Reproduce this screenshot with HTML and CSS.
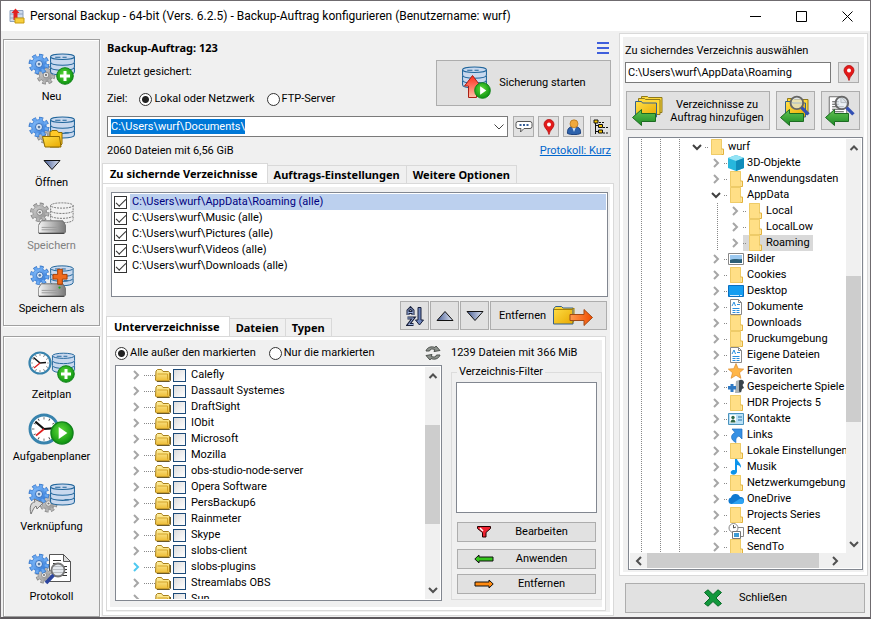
FILE: index.html
```html
<!DOCTYPE html>
<html lang="de">
<head>
<meta charset="utf-8">
<title>Personal Backup</title>
<link rel="stylesheet" href="styles.css">
</head>
<body>
<svg class="sprites" aria-hidden="true">
  <defs>
    <linearGradient id="gBlue" x1="0" y1="0" x2="1" y2="1"><stop offset="0" stop-color="#8fc4fb"/><stop offset="1" stop-color="#2c74d6"/></linearGradient>
    <linearGradient id="gGrey" x1="0" y1="0" x2="1" y2="1"><stop offset="0" stop-color="#d4d4d4"/><stop offset="1" stop-color="#8c8c8c"/></linearGradient>
    <linearGradient id="gTri" x1="0" y1="0" x2="1" y2="0"><stop offset="0" stop-color="#4a5f95"/><stop offset="1" stop-color="#dfe6f4"/></linearGradient>
    <linearGradient id="gFolder" x1="0" y1="0" x2="0" y2="1"><stop offset="0" stop-color="#fff3a8"/><stop offset="1" stop-color="#eebb33"/></linearGradient>
    <linearGradient id="gYellow" x1="0" y1="0" x2="1" y2="1"><stop offset="0" stop-color="#ffe04a"/><stop offset="1" stop-color="#e8a800"/></linearGradient>
    <linearGradient id="gOrange" x1="0" y1="0" x2="1" y2="0"><stop offset="0" stop-color="#ff9a50"/><stop offset="1" stop-color="#f04c00"/></linearGradient>
    <linearGradient id="gGreen" x1="0" y1="0" x2="0" y2="1"><stop offset="0" stop-color="#63c453"/><stop offset="1" stop-color="#1b8a24"/></linearGradient>
    <linearGradient id="gDrive" x1="0" y1="0" x2="1" y2="0"><stop offset="0" stop-color="#f4f4f4"/><stop offset="1" stop-color="#7a7a7a"/></linearGradient>
    <radialGradient id="gBall" cx=".45" cy=".4" r=".6"><stop offset="0" stop-color="#5fdc3a"/><stop offset="1" stop-color="#0c9210"/></radialGradient>
    <linearGradient id="gRed" x1="0" y1="0" x2="0" y2="1"><stop offset="0" stop-color="#ff2a1a"/><stop offset="1" stop-color="#ffc0a8"/></linearGradient>
  </defs>

  <symbol id="gear-blue" viewBox="-12 -12 24 24"><circle r="8.6" fill="none" stroke="#3a78c8" stroke-width="5.400" pathLength="16" stroke-dasharray="1.200 .8"/><circle r="8" fill="url(#gBlue)" stroke="#3f83da" stroke-width="1"/><circle r="8.400" fill="none" stroke="#69a8f1" stroke-width="4" pathLength="16" stroke-dasharray=".9 1.100" stroke-dashoffset="-.15"/><circle r="3.800" fill="#dce9f8" stroke="#2866b8"/><circle r="1.500" fill="#56779f"/></symbol>
  <symbol id="gear-grey" viewBox="-12 -12 24 24"><circle r="8.6" fill="none" stroke="#858585" stroke-width="5.400" pathLength="16" stroke-dasharray="1.200 .8"/><circle r="8" fill="url(#gGrey)" stroke="#8d8d8d" stroke-width="1"/><circle r="8.400" fill="none" stroke="#b4b4b4" stroke-width="4" pathLength="16" stroke-dasharray=".9 1.100" stroke-dashoffset="-.15"/><circle r="3.400" fill="#eee" stroke="#808080"/><circle r="1.400" fill="#777"/></symbol>
  <symbol id="db" viewBox="0 0 26 22"><g fill="#c8d8ee" stroke="#20659b"><path d="M1.5 14v4c0 4.200 23 4.200 23 0v-4"/><path d="M1.500 9v4.500c0 4.200 23 4.200 23 0V9"/><path d="M1.500 3.500V8.500c0 4.200 23 4.200 23 0V3.500"/><ellipse cx="13" cy="3.500" rx="11.500" ry="2.700"/></g><path d="M6 4h5m2 0h4M15 16h4" stroke="#20659b" fill="none"/></symbol>
  <symbol id="db-off" viewBox="0 0 26 22"><g fill="#f2f2f2" stroke="#777" stroke-dasharray="2 1"><path d="M1.500 14v4c0 4.200 23 4.200 23 0v-4"/><path d="M1.500 9v4.500c0 4.200 23 4.200 23 0V9"/><path d="M1.500 3.500V8.500c0 4.200 23 4.200 23 0V3.500"/><ellipse cx="13" cy="3.500" rx="11.500" ry="2.700"/></g></symbol>
  <symbol id="ball-plus" viewBox="0 0 18 18"><circle cx="9" cy="9" r="8.300" fill="url(#gBall)" stroke="#11831a"/><path d="M9 4v10M4 9h10" stroke="#fff" stroke-width="3"/></symbol>
  <symbol id="ball-play" viewBox="0 0 18 18"><circle cx="9" cy="9" r="8.300" fill="url(#gBall)" stroke="#11831a"/><path d="M6.500 4.500v9l6.500-4.500z" fill="#fff"/></symbol>
  <symbol id="drive" viewBox="0 0 30 15"><path d="M3.500 1h23l3 5v7l-2 1.500H1.500L.5 13V6z" fill="url(#gDrive)" stroke="#6d6d6d"/><path d="M1 6h28v7H1z" fill="url(#gDrive)"/><path d="M4 8h16M4 10.500h16" stroke="#9a9a9a"/><path d="M1 14.200h27" stroke="#333"/></symbol>
  <symbol id="clock" viewBox="0 0 24 24"><circle cx="12" cy="12" r="10.500" fill="#fff" stroke="#3883ad" stroke-width="2.200"/><circle cx="12" cy="12" r="8" fill="none" stroke="#444" stroke-width="1.800" pathLength="120" stroke-dasharray="1.500 8.500" stroke-dashoffset=".75"/><path d="M5.500 6.500L12 12l6-.5" stroke="#111" stroke-width="1.600" fill="none"/><path d="M12 12l-6 5" stroke="#e02020" stroke-width="1.300"/></symbol>
  <symbol id="open-folder" viewBox="0 0 22 18"><path d="M8 4V2.500L10 .5h5l1.500 2H20V14l-3 3H8z" fill="#ffc928" stroke="#8e6a00"/><path d="M.5 6.500h17L19 17H3z" fill="url(#gYellow)" stroke="#8e6a00"/></symbol>
  <symbol id="loupe" viewBox="0 0 20 20"><circle cx="7.500" cy="7.500" r="6" fill="#dfe8f0" fill-opacity=".65" stroke="#666" stroke-width="1.800"/><path d="M12 12l6.500 6.500" stroke="#3350b4" stroke-width="3.200"/></symbol>
  <symbol id="page" viewBox="0 0 24 28"><path d="M1.500.5h14l7 7v20h-21z" fill="#fff" stroke="#555"/><path d="M15.500.5v7h7z" fill="#ddd" stroke="#555"/><path d="M5 6.500h8M5 9.500h8M5 12.500h14M5 15.500h14M5 18.500h14M5 21.500h14" stroke="#333"/></symbol>

  <symbol id="i-new" viewBox="0 0 48 32"><use href="#gear-grey" x="8" y="12" width="20" height="20"/><use href="#gear-blue" width="22" height="22"/><use href="#db" x="21" width="27" height="23"/><use href="#ball-plus" x="28" y="14" width="18" height="18"/></symbol>
  <symbol id="i-open" viewBox="0 0 48 32"><use href="#gear-grey" x="8" y="10" width="18" height="18"/><use href="#gear-blue" width="22" height="22"/><use href="#db" x="21" width="27" height="23"/><use href="#open-folder" x="14" y="14" width="22" height="18"/></symbol>
  <symbol id="i-save-off" viewBox="0 0 48 34"><use href="#gear-grey" width="22" height="22"/><use href="#db-off" x="21" width="27" height="23"/><use href="#drive" x="9" y="19" width="30" height="15"/></symbol>
  <symbol id="i-save-as" viewBox="0 0 48 34"><use href="#gear-blue" width="22" height="22"/><use href="#db" x="21" width="27" height="23"/><use href="#drive" x="9" y="19" width="30" height="15"/><path d="M30 4.500h5v5.500h5v5h-5v5.500h-5V15h-5v-5h5z" fill="#f06a1c" stroke="#a33c00"/><circle cx="32" cy="24" r="1.200" fill="#18a51e"/></symbol>
  <symbol id="i-plan" viewBox="0 0 48 32"><use href="#db" x="23" y="1" width="25" height="22"/><use href="#clock" width="24" height="24"/><use href="#ball-plus" x="29" y="14" width="18" height="18"/></symbol>
  <symbol id="i-task" viewBox="0 0 48 32"><use href="#clock" width="32" height="32"/><use href="#ball-play" x="22" y="8" width="24" height="24"/></symbol>
  <symbol id="i-link" viewBox="0 0 48 32"><use href="#gear-grey" x="11" y="11" width="19" height="19"/><use href="#gear-blue" width="22" height="22"/><use href="#db" x="21" width="27" height="23"/><path d="M3 31c-2-7 0-12 4-12l-1-3 9 4-6 6-1-3c-2 1-3 4-5 8z" fill="#d9d9d9" stroke="#777"/></symbol>
  <symbol id="i-log" viewBox="0 0 48 32"><use href="#page" x="20" y="1" width="24" height="28"/><use href="#gear-grey" x="7" y="13" width="18" height="18"/><use href="#gear-blue" width="22" height="22"/><circle cx="30" cy="17" r="6.500" fill="#dfe4ea" fill-opacity=".8" stroke="#777" stroke-width="1.800"/><path d="M25.500 22L18 30" stroke="#2c459f" stroke-width="3.600"/></symbol>

  <symbol id="i-start" viewBox="0 0 32 34"><use href="#db" x="0" y="0" width="27" height="23"/><path d="M11.500 9.500L19.500 20h-4v11.500h-8V20h-4z" fill="url(#gRed)" stroke="#a81f14"/><use href="#ball-play" x="13" y="16" width="17" height="17"/></symbol>
  <symbol id="tri-down" viewBox="0 0 18 12"><path d="M1 1.500h16L9 10.500z" fill="url(#gTri)" stroke="#111"/></symbol>
  <symbol id="tri-up" viewBox="0 0 18 12"><path d="M1 10.500h16L9 1.500z" fill="url(#gTri)" stroke="#111"/></symbol>
  <symbol id="chev-right" viewBox="0 0 12 12"><path d="M4 2l4 4-4 4" fill="none" stroke="currentColor" stroke-width="2"/></symbol>
  <symbol id="chev-left" viewBox="0 0 12 12"><path d="M8 2L4 6l4 4" fill="none" stroke="currentColor" stroke-width="2"/></symbol>
  <symbol id="chev-down" viewBox="0 0 12 12"><path d="M2 4l4 4 4-4" fill="none" stroke="currentColor" stroke-width="2"/></symbol>
  <symbol id="chev-up" viewBox="0 0 12 12"><path d="M2.500 8L6 4.500 9.500 8" fill="none" stroke="currentColor" stroke-width="2"/></symbol>
  <symbol id="pin" viewBox="0 0 12 16"><path d="M6 15.500C5 10.500 1 9 1 5.500a5 5 0 0 1 10 0C11 9 7 10.500 6 15.500z" fill="#e31a1a" stroke="#b50f0f" stroke-width=".8"/><circle cx="6" cy="5.500" r="2" fill="#fff"/></symbol>
  <symbol id="bubble" viewBox="0 0 18 14"><path d="M3 1.500h12a2 2 0 0 1 2 2v3a2 2 0 0 1-2 2H9L5.500 12l.5-3.500H3a2 2 0 0 1-2-2v-3a2 2 0 0 1 2-2z" fill="#fff" stroke="#555"/><path d="M4.500 5h2M8 5h2m1.500 0h2" stroke="#345c96" stroke-width="2"/></symbol>
  <symbol id="user" viewBox="0 0 16 16"><path d="M1.500 14.500c-.5-5 2-7 6.500-7s7 2 6.500 7c-3 1.500-10 1.500-13 0z" fill="#2d62ac" stroke="#1d427f"/><path d="M6 8l2 5 2-5z" fill="#cfe2f7"/><circle cx="8" cy="4.800" r="4" fill="#f0a93c" stroke="#b06f14" stroke-width=".7"/></symbol>
  <symbol id="struct" viewBox="0 0 16 16"><path d="M2.500 3v12M3 6.500h3M3 12.500h3" stroke="#111" fill="none"/><path d="M6 3.500h6M10 8.500h6M10 14h6" stroke="#111" stroke-dasharray="2 1" fill="none"/><path d="M1 1h4v3H1zM5.500 5.500h4v3h-4zM5.500 11h4v3h-4z" fill="#f5c400" stroke="#111"/></symbol>
  <symbol id="sort" viewBox="0 0 18 20"><g fill="none" stroke="#18203c" stroke-width="3"><path d="M2 9V4.500L4.500 2 7 4.500V9M2 6.500h5M1.500 12h6l-5 6.500h5"/></g><path d="M2 9V4.500L4.500 2 7 4.500V9M2 6.500h5M1.500 12h6l-5 6.500h5" fill="none" stroke="#9db1de"/><path d="M12 1.500h3V14h2.500l-4 5-4-5H12z" fill="#6f86bd" stroke="#18203c"/></symbol>
  <symbol id="folder-remove" viewBox="0 0 42 22"><path d="M1.500 4l2-2.500h6l1.500 1.500h10v16h-19.500z" fill="url(#gYellow)" stroke="#34618c"/><path d="M2 4.500h18l2-1.500v13l-2 2.500" fill="none" stroke="#a88100"/><path d="M18 9.500h14V4.500l8.500 8-8.500 8v-5H18z" fill="url(#gOrange)" stroke="#a04a16"/></symbol>
  <symbol id="refresh" viewBox="0 0 18 16"><path d="M2 6c1-4 6-5 9-3.500l1-1.500 4 4.500-6 1 .8-2C8 3.500 6 4 5.500 6z" fill="#8d928d" stroke="#4c504c"/><path d="M16 10c-1 4-6 5-9 3.500L6 15l-4-4.500 6-1-.8 2c2.800 1 4.800.5 5.300-1.500z" fill="#8d928d" stroke="#4c504c"/></symbol>
  <symbol id="funnel" viewBox="0 0 14 12"><path d="M.5.500h13v2L9 6.500v4.500H5.500V6.500l-5-4z" fill="#ee2230" stroke="#200"/><path d="M3 2l3 3" stroke="#fff" stroke-width="1.500"/></symbol>
  <symbol id="arr-left" viewBox="0 0 20 10"><path d="M.8 5L5 1v2h14v4H5v2z" fill="#35c51c" stroke="#111"/></symbol>
  <symbol id="arr-right" viewBox="0 0 20 10"><path d="M19.200 5L15 1v2H1v4h14v2z" fill="#ff8a10" stroke="#111"/></symbol>
  <symbol id="big-arrow" viewBox="0 0 24 17"><path d="M.5 8.500L9.500.500v4h14v8h-14v4z" fill="url(#gGreen)" stroke="#1c6b22"/></symbol>
  <symbol id="folders-add" viewBox="0 0 32 32"><g fill="#ffd83a" stroke="#8f7a1a"><path d="M9.500 3V1.500h6l1 1H30v15H9.500z"/><path d="M6.500 5V3.500h6l1 1H28v15H6.500z"/></g><path d="M3.500 8V6.500h6l1 1.500H24.500v14h-21z" fill="url(#gYellow)" stroke="#34618c"/><use href="#big-arrow" x="0" y="14" width="24" height="17"/></symbol>
  <symbol id="folder-find" viewBox="0 0 32 32"><path d="M7.500 5V3.500h6l1 1H28v15H7.500z" fill="#ffd83a" stroke="#8f7a1a"/><path d="M5.500 8V6.500h6l1 1.500H25.500v14h-20z" fill="url(#gYellow)" stroke="#34618c"/><use href="#loupe" x="9" y="0" width="21" height="21"/><use href="#big-arrow" x="0" y="14" width="24" height="17"/></symbol>
  <symbol id="page-find" viewBox="0 0 32 32"><use href="#page" x="3" y="1" width="20" height="24"/><use href="#loupe" x="9" y="0" width="21" height="21"/><use href="#big-arrow" x="0" y="14" width="24" height="17"/></symbol>
  <symbol id="cross" viewBox="0 0 20 18"><path d="M1.500 3.500L5 .8 10 5.500 15 .8l3.500 2.700L13 9l5.500 5.500L15 17.200 10 12.500 5 17.200 1.500 14.500 7 9z" fill="#12983c" stroke="#0a6a28"/></symbol>
  <symbol id="app" viewBox="0 0 16 16"><path d="M1 2.500h13v11H1z" fill="#cfdbec" stroke="#8fa3be"/><path d="M1 6h13M1 10h13" stroke="#8fa3be"/><path d="M6.500.5L10.500 5H8.500v7h-4V5h-2z" fill="#e22222"/><path d="M6 10h9v5H6z" fill="#f7cf3c" stroke="#c79a10"/></symbol>

  <symbol id="f-classic" viewBox="0 0 16 16"><path d="M1 4l1.500-1.500h4L8 4.500h5.500l1 1V13l-1 1h-12L.5 13z" fill="url(#gFolder)" stroke="#a8801c"/><path d="M2.500 7h10v5.500" fill="none" stroke="#d3a42a"/><path d="M2 14.500h12.500l1-1V6" fill="none" stroke="#6a5a2c"/></symbol>
  <symbol id="f-win" viewBox="0 0 16 16"><path d="M2 0h11v16H2z" fill="#ffdf86"/><path d="M2.500.500h10v15h-10z" fill="none" stroke="#eecb68"/><path d="M12.500 10h2v5.500h-2" fill="#ffe7a0" stroke="#e2b23c"/></symbol>
  <symbol id="f-3d" viewBox="0 0 16 16"><path d="M0 3l8-3 8 3v10l-8 3-8-3z" fill="#27b7dd"/><path d="M0 3l8 3 8-3-8-3z" fill="#94e3f5"/><path d="M8 6l8-3v10l-8 3z" fill="#118dbb"/></symbol>
  <symbol id="f-pic" viewBox="0 0 16 16"><path d="M.5 2.500h15v11H.5z" fill="#fff" stroke="#888"/><path d="M2 4h12v8H2z" fill="#9cc9f0"/><path d="M2 9c4-2 8 0 12-1v4H2z" fill="#2b5f78"/></symbol>
  <symbol id="f-desk" viewBox="0 0 16 16"><path d="M.5 2.500h15v11H.5z" fill="#149df0" stroke="#0a6fc0"/><path d="M2 12.500h9m1 0h2" stroke="#cfeaff"/></symbol>
  <symbol id="f-doc" viewBox="0 0 16 16"><path d="M2.500.500h8l3 3v12h-11z" fill="#fff" stroke="#888"/><path d="M10.500.500v3h3" fill="none" stroke="#888"/><path d="M4 7l2-4 1.500 4M9 5.500h3M4.500 9.500h7M4.500 11.500h3m1 0h3M4.500 13.500h3m1 0h3" stroke="#2a8fe0" fill="none"/></symbol>
  <symbol id="f-star" viewBox="0 0 16 16"><path d="M8 .5l2.200 5.200 5.500.4-4.200 3.600 1.400 5.600L8 12.300l-4.900 3 1.400-5.600L.3 6.100l5.500-.4z" fill="#ffb648" stroke="#dc8a28" stroke-width=".7"/></symbol>
  <symbol id="f-game" viewBox="0 0 16 16"><path d="M8 2l3-1 1 13H7z" fill="#aab3b8"/><path d="M11 1.500c2-1.500 5-.5 5 2.500l-1.500 2L16 9l-2 1-1 3.500-2-1z" fill="#3a444b"/><path d="M0 7h2.500V5h3v2H8v3.500H5.500V13h-3v-2.500H0z" fill="#2e79c4"/></symbol>
  <symbol id="f-contact" viewBox="0 0 16 16"><path d="M.5 2.500h15v11H.5z" fill="#b9e0f6" stroke="#4a93bd"/><path d="M2 4h6v8H2z" fill="#fff"/><circle cx="5" cy="6.500" r="1.700" fill="#2f6a4a"/><path d="M2.500 11.500c0-4 5-4 5 0z" fill="#2f6a4a"/><path d="M10 6h4M10 9h4" stroke="#2a75aa"/></symbol>
  <symbol id="f-link" viewBox="0 0 16 16"><path d="M4 2h10v10l-3-3c-3 1-3.500 3.500-3 6.500C2.500 13 2 8 7 5.500z" fill="#3590e4" stroke="#1e6fc0" stroke-width=".7"/></symbol>
  <symbol id="f-music" viewBox="0 0 16 16"><path d="M7 0h2c.5 3 4.500 4 4 9-1-2-2-3-4-3v6.500C9 15 6.500 16 4.500 15.500S2 12.500 4 11.500c1-.6 2-.5 3-.2z" fill="#0c94ec"/></symbol>
  <symbol id="f-cloud" viewBox="0 0 16 16"><path d="M3.500 13A3.300 3.300 0 0 1 3 6.500 4.800 4.800 0 0 1 12 6a3.500 3.500 0 0 1 1 7z" fill="#0f79d0"/><path d="M3.500 13l8-5c3-1.500 5 1 4.300 3-.4 1.400-1.500 2-2.800 2z" fill="#2ea3f2"/></symbol>
  <symbol id="f-recent" viewBox="0 0 16 16"><path d="M8.500 4.500h7v9h-7z" fill="#fff" stroke="#888"/><circle cx="5.500" cy="5" r="4.500" fill="#fff" stroke="#888"/><path d="M5.500 5V2M5.500 5l2.500-1" stroke="#555"/><path d="M4.500 8.500h8v7h-8z" fill="#fff" stroke="#777"/><path d="M6 10h5v4H6z" fill="#3c9bd6"/></symbol>
</svg>

<header class="titlebar">
  <svg class="i16"><use href="#app"/></svg>
  <h1>Personal Backup - 64-bit (Vers. 6.2.5) - Backup-Auftrag konfigurieren (Benutzername: wurf)</h1>
  <div class="win-buttons">
    <button type="button" aria-label="Minimieren"><svg viewBox="0 0 11 11"><path d="M0 5.500h11" stroke="#000"/></svg></button>
    <button type="button" aria-label="Maximieren"><svg viewBox="0 0 11 11"><path d="M.5.500h10v10H.5z" fill="none" stroke="#000"/></svg></button>
    <button type="button" aria-label="Fenster schließen"><svg viewBox="0 0 11 11"><path d="M.5.500l10 10m0-10l-10 10" stroke="#000"/></svg></button>
  </div>
</header>

<div class="content">
  <nav class="sidebar">
    <div class="toolbox">
      <button type="button" class="tool"><svg class="tool-icon"><use href="#i-new"/></svg><span>Neu</span></button>
      <button type="button" class="tool"><svg class="tool-icon"><use href="#i-open"/></svg><svg class="tool-drop"><use href="#tri-down"/></svg><span>Öffnen</span></button>
      <button type="button" class="tool" disabled><svg class="tool-icon"><use href="#i-save-off"/></svg><span>Speichern</span></button>
      <button type="button" class="tool"><svg class="tool-icon"><use href="#i-save-as"/></svg><span>Speichern als</span></button>
    </div>
    <div class="toolbox toolbox-grow">
      <button type="button" class="tool"><svg class="tool-icon"><use href="#i-plan"/></svg><span>Zeitplan</span></button>
      <button type="button" class="tool"><svg class="tool-icon"><use href="#i-task"/></svg><span>Aufgabenplaner</span></button>
      <button type="button" class="tool tool-apart"><svg class="tool-icon"><use href="#i-link"/></svg><span>Verknüpfung</span></button>
      <button type="button" class="tool tool-apart"><svg class="tool-icon"><use href="#i-log"/></svg><span>Protokoll</span></button>
    </div>
  </nav>

  <main class="job">
    <div class="job-head">
      <div class="spread"><h2>Backup-Auftrag: 123</h2><button type="button" class="menu" aria-label="Menü"><svg viewBox="0 0 12 12"><path d="M0 1h12M0 6h12M0 11h12" stroke="#3f5fdc" stroke-width="2"/></svg></button></div>
      <div class="spread head-row">
        <div class="head-text">
          <span>Zuletzt gesichert:</span>
          <div class="radios">
            <span>Ziel:</span>
            <label class="radio"><input type="radio" name="ziel" checked>Lokal oder Netzwerk</label>
            <label class="radio"><input type="radio" name="ziel">FTP-Server</label>
          </div>
        </div>
        <button type="button" class="btn start"><svg><use href="#i-start"/></svg>Sicherung starten</button>
      </div>
      <div class="target">
        <div class="combo"><input type="text" aria-label="Zielverzeichnis" value="C:\Users\wurf\Documents\"><button type="button" aria-label="Liste öffnen"><svg viewBox="0 0 10 6"><path d="M.5.500L5 5l4.500-4.500" fill="none" stroke="#444"/></svg></button></div>
        <button type="button" class="btn sq" aria-label="Kommentar"><svg class="i18"><use href="#bubble"/></svg></button>
        <button type="button" class="btn sq" aria-label="Pfad wählen"><svg class="i16"><use href="#pin"/></svg></button>
        <button type="button" class="btn sq" aria-label="Anmeldung"><svg class="i16"><use href="#user"/></svg></button>
        <button type="button" class="btn sq sq-last" aria-label="Struktur"><svg class="i16"><use href="#struct"/></svg></button>
      </div>
      <div class="spread"><span>2060 Dateien mit 6,56 GiB</span><a href="#protokoll">Protokoll: Kurz</a></div>
    </div>

    <div class="tabs" role="tablist">
      <button type="button" role="tab" aria-selected="true">Zu sichernde Verzeichnisse</button>
      <button type="button" role="tab">Auftrags-Einstellungen</button>
      <button type="button" role="tab">Weitere Optionen</button>
    </div>
    <section class="page page-outer">
      <div class="checklist">
        <label class="current"><input type="checkbox" checked><span>C:\Users\wurf\AppData\Roaming (alle)</span></label>
        <label><input type="checkbox" checked><span>C:\Users\wurf\Music (alle)</span></label>
        <label><input type="checkbox" checked><span>C:\Users\wurf\Pictures (alle)</span></label>
        <label><input type="checkbox" checked><span>C:\Users\wurf\Videos (alle)</span></label>
        <label><input type="checkbox" checked><span>C:\Users\wurf\Downloads (alle)</span></label>
      </div>
      <div class="sub-head">
        <div class="tabs" role="tablist">
          <button type="button" role="tab" aria-selected="true">Unterverzeichnisse</button>
          <button type="button" role="tab">Dateien</button>
          <button type="button" role="tab">Typen</button>
        </div>
        <div class="list-actions">
          <button type="button" class="btn" aria-label="Sortieren"><svg class="i-sort"><use href="#sort"/></svg></button>
          <button type="button" class="btn" aria-label="Nach oben"><svg class="i-tri"><use href="#tri-up"/></svg></button>
          <button type="button" class="btn" aria-label="Nach unten"><svg class="i-tri"><use href="#tri-down"/></svg></button>
          <button type="button" class="btn remove">Entfernen<svg><use href="#folder-remove"/></svg></button>
        </div>
      </div>
      <section class="page page-inner">
        <div class="subdirs">
          <div class="radios">
            <label class="radio"><input type="radio" name="mark" checked>Alle außer den markierten</label>
            <label class="radio"><input type="radio" name="mark">Nur die markierten</label>
            <button type="button" class="plain" aria-label="Aktualisieren"><svg><use href="#refresh"/></svg></button>
          </div>
          <div class="tree-box">
            <ul class="tree dirs">
              <li><svg class="chev"><use href="#chev-right"/></svg><label><i></i><svg class="i16"><use href="#f-classic"/></svg><input type="checkbox"><span>Calefly</span></label></li>
              <li><svg class="chev"><use href="#chev-right"/></svg><label><i></i><svg class="i16"><use href="#f-classic"/></svg><input type="checkbox"><span>Dassault Systemes</span></label></li>
              <li><svg class="chev"><use href="#chev-right"/></svg><label><i></i><svg class="i16"><use href="#f-classic"/></svg><input type="checkbox"><span>DraftSight</span></label></li>
              <li><svg class="chev"><use href="#chev-right"/></svg><label><i></i><svg class="i16"><use href="#f-classic"/></svg><input type="checkbox"><span>IObit</span></label></li>
              <li><svg class="chev"><use href="#chev-right"/></svg><label><i></i><svg class="i16"><use href="#f-classic"/></svg><input type="checkbox"><span>Microsoft</span></label></li>
              <li><svg class="chev"><use href="#chev-right"/></svg><label><i></i><svg class="i16"><use href="#f-classic"/></svg><input type="checkbox"><span>Mozilla</span></label></li>
              <li><svg class="chev"><use href="#chev-right"/></svg><label><i></i><svg class="i16"><use href="#f-classic"/></svg><input type="checkbox"><span>obs-studio-node-server</span></label></li>
              <li><svg class="chev"><use href="#chev-right"/></svg><label><i></i><svg class="i16"><use href="#f-classic"/></svg><input type="checkbox"><span>Opera Software</span></label></li>
              <li><svg class="chev"><use href="#chev-right"/></svg><label><i></i><svg class="i16"><use href="#f-classic"/></svg><input type="checkbox"><span>PersBackup6</span></label></li>
              <li><svg class="chev"><use href="#chev-right"/></svg><label><i></i><svg class="i16"><use href="#f-classic"/></svg><input type="checkbox"><span>Rainmeter</span></label></li>
              <li><svg class="chev"><use href="#chev-right"/></svg><label><i></i><svg class="i16"><use href="#f-classic"/></svg><input type="checkbox"><span>Skype</span></label></li>
              <li><svg class="chev"><use href="#chev-right"/></svg><label><i></i><svg class="i16"><use href="#f-classic"/></svg><input type="checkbox"><span>slobs-client</span></label></li>
              <li><svg class="chev hot"><use href="#chev-right"/></svg><label><i></i><svg class="i16"><use href="#f-classic"/></svg><input type="checkbox"><span>slobs-plugins</span></label></li>
              <li><svg class="chev"><use href="#chev-right"/></svg><label><i></i><svg class="i16"><use href="#f-classic"/></svg><input type="checkbox"><span>Streamlabs OBS</span></label></li>
              <li><svg class="chev"><use href="#chev-right"/></svg><label><i></i><svg class="i16"><use href="#f-classic"/></svg><input type="checkbox"><span>Sun</span></label></li>
            </ul>
            <div class="vbar"><svg><use href="#chev-up"/></svg><div class="track track-dirs"><div class="thumb"></div></div><svg><use href="#chev-down"/></svg></div>
          </div>
        </div>
        <div class="filter">
          <span>1239 Dateien mit 366 MiB</span>
          <fieldset>
            <legend>Verzeichnis-Filter</legend>
            <select multiple aria-label="Verzeichnis-Filter"></select>
            <div class="filter-actions">
              <button type="button" class="btn"><svg class="i-filter"><use href="#funnel"/></svg><span>Bearbeiten</span></button>
              <button type="button" class="btn btn-apart"><svg class="i-filter"><use href="#arr-left"/></svg><span>Anwenden</span></button>
              <button type="button" class="btn"><svg class="i-filter"><use href="#arr-right"/></svg><span>Entfernen</span></button>
            </div>
          </fieldset>
        </div>
      </section>
    </section>
  </main>

  <aside class="picker">
    <section class="picker-panel">
      <label for="pfad">Zu sicherndes Verzeichnis auswählen</label>
      <div class="path-row"><input id="pfad" type="text" value="C:\Users\wurf\AppData\Roaming"><button type="button" class="btn sq" aria-label="Pfad wählen"><svg class="i16"><use href="#pin"/></svg></button></div>
      <div class="add-row">
        <button type="button" class="btn add"><svg class="i32"><use href="#folders-add"/></svg><span>Verzeichnisse zu<br>Auftrag hinzufügen</span></button>
        <button type="button" class="btn" aria-label="Ordner suchen"><svg class="i32"><use href="#folder-find"/></svg></button>
        <button type="button" class="btn" aria-label="Datei suchen"><svg class="i32"><use href="#page-find"/></svg></button>
      </div>
      <div class="tree-box explorer-box">
        <ul class="tree explorer">
          <li><svg class="chev open"><use href="#chev-down"/></svg><span class="node"><i></i><svg class="i16"><use href="#f-win"/></svg><span>wurf</span></span></li>
          <li class="d1"><svg class="chev"><use href="#chev-right"/></svg><span class="node"><i></i><svg class="i16"><use href="#f-3d"/></svg><span>3D-Objekte</span></span></li>
          <li class="d1"><svg class="chev"><use href="#chev-right"/></svg><span class="node"><i></i><svg class="i16"><use href="#f-win"/></svg><span>Anwendungsdaten</span></span></li>
          <li class="d1"><svg class="chev open"><use href="#chev-down"/></svg><span class="node"><i></i><svg class="i16"><use href="#f-win"/></svg><span>AppData</span></span></li>
          <li class="d2"><svg class="chev"><use href="#chev-right"/></svg><span class="node"><i></i><svg class="i16"><use href="#f-win"/></svg><span>Local</span></span></li>
          <li class="d2"><svg class="chev"><use href="#chev-right"/></svg><span class="node"><i></i><svg class="i16"><use href="#f-win"/></svg><span>LocalLow</span></span></li>
          <li class="d2"><svg class="chev"><use href="#chev-right"/></svg><span class="node picked"><i></i><svg class="i16"><use href="#f-win"/></svg><span>Roaming</span></span></li>
          <li class="d1"><svg class="chev"><use href="#chev-right"/></svg><span class="node"><i></i><svg class="i16"><use href="#f-pic"/></svg><span>Bilder</span></span></li>
          <li class="d1"><svg class="chev"><use href="#chev-right"/></svg><span class="node"><i></i><svg class="i16"><use href="#f-win"/></svg><span>Cookies</span></span></li>
          <li class="d1"><svg class="chev"><use href="#chev-right"/></svg><span class="node"><i></i><svg class="i16"><use href="#f-desk"/></svg><span>Desktop</span></span></li>
          <li class="d1"><svg class="chev"><use href="#chev-right"/></svg><span class="node"><i></i><svg class="i16"><use href="#f-doc"/></svg><span>Dokumente</span></span></li>
          <li class="d1"><svg class="chev"><use href="#chev-right"/></svg><span class="node"><i></i><svg class="i16"><use href="#f-win"/></svg><span>Downloads</span></span></li>
          <li class="d1"><svg class="chev"><use href="#chev-right"/></svg><span class="node"><i></i><svg class="i16"><use href="#f-win"/></svg><span>Druckumgebung</span></span></li>
          <li class="d1"><svg class="chev"><use href="#chev-right"/></svg><span class="node"><i></i><svg class="i16"><use href="#f-doc"/></svg><span>Eigene Dateien</span></span></li>
          <li class="d1"><svg class="chev"><use href="#chev-right"/></svg><span class="node"><i></i><svg class="i16"><use href="#f-star"/></svg><span>Favoriten</span></span></li>
          <li class="d1"><svg class="chev"><use href="#chev-right"/></svg><span class="node"><i></i><svg class="i16"><use href="#f-game"/></svg><span>Gespeicherte Spiele</span></span></li>
          <li class="d1"><svg class="chev"><use href="#chev-right"/></svg><span class="node"><i></i><svg class="i16"><use href="#f-win"/></svg><span>HDR Projects 5</span></span></li>
          <li class="d1"><svg class="chev"><use href="#chev-right"/></svg><span class="node"><i></i><svg class="i16"><use href="#f-contact"/></svg><span>Kontakte</span></span></li>
          <li class="d1"><svg class="chev"><use href="#chev-right"/></svg><span class="node"><i></i><svg class="i16"><use href="#f-link"/></svg><span>Links</span></span></li>
          <li class="d1"><svg class="chev"><use href="#chev-right"/></svg><span class="node"><i></i><svg class="i16"><use href="#f-win"/></svg><span>Lokale Einstellungen</span></span></li>
          <li class="d1"><svg class="chev"><use href="#chev-right"/></svg><span class="node"><i></i><svg class="i16"><use href="#f-music"/></svg><span>Musik</span></span></li>
          <li class="d1"><svg class="chev"><use href="#chev-right"/></svg><span class="node"><i></i><svg class="i16"><use href="#f-win"/></svg><span>Netzwerkumgebung</span></span></li>
          <li class="d1"><svg class="chev"><use href="#chev-right"/></svg><span class="node"><i></i><svg class="i16"><use href="#f-cloud"/></svg><span>OneDrive</span></span></li>
          <li class="d1"><svg class="chev"><use href="#chev-right"/></svg><span class="node"><i></i><svg class="i16"><use href="#f-win"/></svg><span>Projects Series</span></span></li>
          <li class="d1"><svg class="chev"><use href="#chev-right"/></svg><span class="node"><i></i><svg class="i16"><use href="#f-recent"/></svg><span>Recent</span></span></li>
          <li class="d1"><svg class="chev"><use href="#chev-right"/></svg><span class="node"><i></i><svg class="i16"><use href="#f-win"/></svg><span>SendTo</span></span></li>
        </ul>
        <div class="vbar"><svg><use href="#chev-up"/></svg><div class="track track-explorer"><div class="thumb"></div></div><svg><use href="#chev-down"/></svg></div>
        <div class="hbar"><svg><use href="#chev-left"/></svg><div class="track"><div class="thumb"></div></div><svg><use href="#chev-right"/></svg></div>
      </div>
    </section>
    <button type="button" class="btn close"><svg><use href="#cross"/></svg>Schließen</button>
  </aside>
</div>
</body>
</html>
```
FILE: styles.css
```css
* { box-sizing: border-box; }

body {
  display: flex;
  flex-direction: column;
  height: 100vh;
  margin: 0;
  border: 1px solid #6f6b6f;
  border-bottom: 2px solid #5c585c;
  background: #f0f0f0;
  color: #000;
  font: 11px/16px Roboto, "Open Sans", sans-serif;
  overflow: hidden;
}

svg { display: block; flex: none; overflow: visible; }
.sprites { position: absolute; width: 0; height: 0; }
.i16 { width: 16px; height: 16px; }
.i18 { width: 18px; height: 14px; }
.i32 { width: 32px; height: 32px; }

button, input, select { margin: 0; font: inherit; color: inherit; }
button { display: flex; align-items: center; justify-content: center; padding: 0; border: 0; background: none; white-space: nowrap; }
h1, h2 { margin: 0; }
h2, .tabs button { font-family: "Noto Sans", "Open Sans", sans-serif; font-size: 11px; font-weight: 700; }

.btn { border: 1px solid #adadad; background: #e1e1e1; }
.sq { width: 21px; height: 21px; flex: none; }

/* title bar */
.titlebar { display: flex; align-items: center; flex: none; height: 30px; padding-left: 8px; background: #fff; gap: 5px; }
.titlebar h1 { font-size: 12px; font-weight: 400; white-space: nowrap; }
.win-buttons { display: flex; margin-left: auto; }
.win-buttons button { width: 46px; height: 30px; }
.win-buttons svg { width: 11px; height: 11px; }

.content { display: flex; flex: 1; min-height: 0; }

/* sidebar */
.sidebar { display: flex; flex-direction: column; flex: none; width: 101px; padding: 8px 2px 0 2px; gap: 10px; }
.toolbox { display: flex; flex-direction: column; gap: 11px; padding: 13px 0 8px; border: 1px solid #a0a0a0; box-shadow: inset 1px 1px #fff, 1px 1px #fff; }
.toolbox-grow { flex: 1; gap: 10px; padding-top: 14px; }
.tool { flex-direction: column; gap: 4px; }
.tool:disabled { color: #808080; }
.tool-icon { width: 48px; height: 32px; }
.tool-drop { width: 18px; height: 12px; margin-top: 7px; }
.tool-apart { margin-top: 8px; }

/* backup job */
.job { display: flex; flex-direction: column; flex: 1; min-width: 0; }
.job-head { display: flex; flex-direction: column; padding: 9px 3px 4px 5px; }
.spread { display: flex; justify-content: space-between; }
.menu svg { width: 12px; height: 12px; }
.menu { margin-right: 2px; }
.head-row { margin-top: 4px; }
.head-text { display: flex; flex-direction: column; gap: 11px; padding-top: 4px; }
.radios { display: flex; align-items: center; gap: 12px; }
.radio { display: flex; align-items: center; gap: 2px; white-space: nowrap; }
input[type="radio"] { appearance: none; width: 13px; height: 13px; border: 1px solid #333; border-radius: 50%; background: #fff; }
input[type="radio"]:checked { background: radial-gradient(circle, #222 0 3px, #fff 4px); }
.start { width: 175px; height: 46px; gap: 6px; }
.start svg { width: 32px; height: 34px; }
.target { display: flex; gap: 4px; margin: 9px 0 6px; }
.combo { display: flex; align-items: center; flex: 1; min-width: 0; height: 21px; margin-right: 1px; padding-left: 3px; border: 1px solid #7a7a7a; background: #fff; }
.combo input { field-sizing: content; height: 15px; padding: 0; border: 0; background: #0078d7; color: #fff; }
.combo button { width: 17px; margin-left: auto; }
.combo svg { width: 10px; height: 6px; }
.sq-last { margin-left: 2px; }
.job-head a { color: #0066cc; }

/* tabs */
.tabs { display: flex; align-items: flex-end; }
.tabs button { height: 18px; padding: 0 6px; border: 1px solid #d9d9d9; border-bottom: 0; }
.tabs button + button { border-left: 0; }
.tabs button[aria-selected="true"] { height: 20px; padding: 0 9px 0 7px; background: #fff; }
.page { display: flex; flex: 1; min-height: 0; border: 1px solid #d9d9d9; box-shadow: inset 0 0 0 3px #fff; }
.page-outer { flex-direction: column; padding: 8px 4px 4px 4px; margin-bottom: 1px; }
.page-inner { padding: 8px 3px 9px 8px; gap: 9px; margin: 0 3px 0 -1px; }

.checklist { display: flex; flex-direction: column; flex: none; height: 105px; margin: 0 1px 3px 4px; padding: 1px; border: 1px solid #828790; background: #fff; }
.checklist label { display: flex; gap: 3px; padding-left: 1px; }
.checklist span { flex: 1; padding-left: 2px; }
.checklist .current span { background: #bcd0ee; color: #00007f; }
input[type="checkbox"] { appearance: none; display: grid; place-items: center; flex: none; width: 13px; height: 13px; border: 1px solid #333; background: #fff; }
.checklist input { margin-top: 2px; }
input[type="checkbox"]:checked::after { content: ""; width: 9px; height: 4px; margin-top: -3px; border: solid #333; border-width: 0 0 1px 1px; transform: rotate(-45deg); }

.sub-head { display: flex; justify-content: space-between; flex: none; height: 36px; }
.sub-head .tabs { margin-left: -1px; }
.list-actions { display: flex; gap: 1px; padding: 1px 2px 0 0; }
.list-actions .btn { width: 29px; height: 29px; }
.list-actions .remove { width: 117px; gap: 6px; padding-right: 4px; }
.remove svg { width: 42px; height: 22px; }
.i-sort { width: 18px; height: 20px; }
.i-tri { width: 18px; height: 12px; }

/* trees */
.subdirs { display: flex; flex-direction: column; flex: 1; min-width: 0; }
.subdirs .radios { gap: 13px; margin-bottom: 4px; }
.plain { margin-left: auto; }
.plain svg { width: 18px; height: 16px; }
.tree-box { display: grid; grid-template-columns: 1fr 15px; flex: 1; min-height: 0; padding: 1px; border: 1px solid #828790; background: #fff; }
.tree { min-height: 0; margin: 0; padding: 0; list-style: none; overflow: hidden; }
.tree li { display: flex; align-items: center; gap: 2px; height: 16px; white-space: nowrap; }
.tree label, .node { display: flex; align-items: center; height: 16px; }
.tree i { width: 4px; height: 1px; background: repeating-linear-gradient(to right, #888 0 1px, transparent 1px 2px); }
.chev { width: 12px; height: 12px; color: #a6a6a6; }
.chev.open { color: #404040; }
.chev.hot { color: #4ec9f0; }
.dirs li { padding-left: 13px; }
.dirs i { width: 11px; }
.dirs input { margin: 0 5px 0 2px; border-color: #1c4a78; background: linear-gradient(135deg, #ddd, #fff); }
.explorer { background: repeating-linear-gradient(#888 0 1px, #fff 1px 2px) 11px 0 / 1px 100% no-repeat, repeating-linear-gradient(#888 0 1px, #fff 1px 2px) 30px 0 / 1px 100% no-repeat, repeating-linear-gradient(#888 0 1px, #fff 1px 2px) 49px 0 / 1px 100% no-repeat; }
.explorer li { padding-left: 61px; }
.explorer .d1 { padding-left: 80px; }
.explorer .d2 { padding-left: 99px; background: repeating-linear-gradient(#888 0 1px, #fff 1px 2px) 87px 0 / 1px 100% no-repeat; }
.node span { padding: 0 3px; }
.picked { background: #d9d9d9; }

.vbar, .hbar { display: flex; background: #f0f0f0; color: #505050; }
.vbar { flex-direction: column; align-items: center; padding: 3px 0; min-height: 0; }
.hbar { grid-column: 1 / 3; align-items: center; height: 15px; padding: 0 20px 0 3px; }
.vbar svg, .hbar svg { width: 12px; height: 12px; }
.track { display: flex; flex: 1; align-self: stretch; min-height: 0; }
.track-dirs, .track-explorer { flex-direction: column; }
.thumb { background: #cdcdcd; }
.track-dirs .thumb { height: 49%; margin-top: 43px; }
.track-explorer .thumb { height: 38%; margin-top: 122px; }
.hbar .thumb { flex: 1; margin: 0 10px 0 2px; }

/* filter */
.filter { display: flex; flex-direction: column; flex: none; width: 151px; }
fieldset { display: flex; flex-direction: column; flex: 1; min-width: 0; min-height: 0; margin: 3px 0 1px; padding: 2px 4px 5px 4px; border: 1px solid #dcdcdc; }
legend { margin-left: 1px; padding: 0 2px; }
fieldset select { flex: 1; min-height: 0; width: 100%; appearance: none; padding: 0; border: 1px solid #828790; border-radius: 0; background: #fff; }
.filter-actions { display: flex; flex-direction: column; gap: 5px; padding: 9px 1px 0; }
.filter-actions .btn { height: 20px; gap: 10px; }
.filter-actions .btn-apart { margin-top: 2px; }
.filter-actions span { width: 76px; }
.i-filter { width: 20px; height: 12px; }

/* directory picker */
.picker { display: flex; flex-direction: column; flex: none; width: 256px; padding: 2px 2px 4px 5px; gap: 7px; }
.picker-panel { display: flex; flex-direction: column; flex: 1; min-height: 0; padding: 9px 4px 5px 5px; border: 1px solid #d9d9d9; box-shadow: inset 0 0 0 3px #fff; }
.path-row { display: flex; gap: 7px; margin: 3px 4px 8px 0; }
.path-row input { flex: 1; min-width: 0; height: 21px; padding: 0 2px; border: 1px solid #7a7a7a; background: #fff; }
.add-row { display: flex; gap: 6px; margin: 0 3px 7px 1px; }
.add-row .btn { width: 39px; height: 39px; flex: none; }
.add-row .add { flex: 1; gap: 6px; line-height: 13px; }
.explorer-box { grid-template-rows: 1fr 15px; margin-left: 3px; }
.close { height: 30px; margin: 0 3px 0 6px; gap: 16px; }
.close svg { width: 20px; height: 18px; }
```
